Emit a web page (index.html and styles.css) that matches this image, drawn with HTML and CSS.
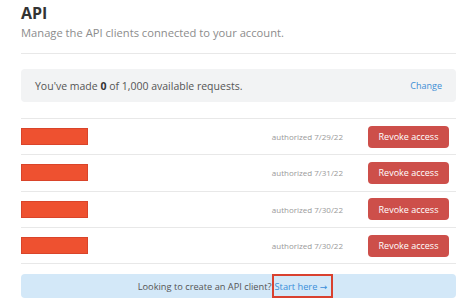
FILE: index.html
```html
<!DOCTYPE html>
<html>
<head>
<meta charset="utf-8">
<link rel="stylesheet" href="styles.css">
</head>
<body>
<div class="page">
  <header class="head">
    <h1 class="title">API</h1>
    <p class="subtitle">Manage the API clients connected to your account.</p>
  </header>
  <div class="usage">
    <span class="usage-text">You've made <b>0</b> of 1,000 available requests.</span>
    <a class="change" href="#">Change</a>
  </div>
  <ul class="clients">
    <li class="client">
      <span class="redact"></span>
      <span class="auth">authorized 7/29/22</span>
      <button class="revoke">Revoke access</button>
    </li>
    <li class="client">
      <span class="redact"></span>
      <span class="auth">authorized 7/31/22</span>
      <button class="revoke">Revoke access</button>
    </li>
    <li class="client">
      <span class="redact"></span>
      <span class="auth">authorized 7/30/22</span>
      <button class="revoke">Revoke access</button>
    </li>
    <li class="client">
      <span class="redact"></span>
      <span class="auth">authorized 7/30/22</span>
      <button class="revoke">Revoke access</button>
    </li>
  </ul>
  <div class="create">
    <span class="create-text">Looking to create an API client?</span><span class="highlight"><a class="start" href="#">Start here <span class="arrow">→</span></a></span>
  </div>
</div>
</body>
</html>
```
FILE: styles.css
```css
* { box-sizing: border-box; }
html, body { margin: 0; padding: 0; background: #ffffff; }
body { font-family: "Open Sans", "Noto Sans", sans-serif; color: #555; }
.page { padding: 3px 18px 0 21px; width: 474px; }
.head { border-bottom: 1px solid #e8e8e8; padding-bottom: 12px; }
.title { margin: 0; font-size: 16px; line-height: 20px; font-weight: 700; color: #333; }
.subtitle { margin: 2px 0 0; font-size: 11.2px; line-height: 16px; color: #8c8c8c; }
.usage { margin-top: 15px; height: 33px; background: #f2f3f4; border-radius: 4px; display: flex; align-items: center; justify-content: space-between; padding: 0 13px 0 14px; }
.usage-text { font-size: 10.5px; color: #555; }
.usage-text b { color: #333; }
.change { font-size: 9px; color: #3d8ed4; text-decoration: none; margin-right: 1px; }
.clients { list-style: none; margin: 16px 0 0; padding: 0; border-top: 1px solid #e8e8e8; }
.client { height: 36.3px; border-bottom: 1px solid #e8e8e8; display: flex; align-items: center; padding-right: 7px; }
.redact { width: 67px; height: 17px; background: #ee5130; border: 1px solid #d9442a; }
.auth { margin-left: auto; font-size: 8px; color: #999; margin-right: 25px; }
.revoke { width: 81px; height: 22px; border: none; border-radius: 4px; background: #cd4f4a; color: #fff; font-family: inherit; font-size: 9px; padding: 0; }
.create { margin-top: 10px; height: 24px; background: #d3e8f8; border-radius: 4px; display: flex; align-items: center; justify-content: center; padding-right: 6px; font-size: 9.25px; }
.create-text { color: #555; }
.highlight { display: inline-flex; align-items: center; height: 24px; border: 2px solid #d9412f; padding: 0 4px 0 1px; }
.start { color: #3a8ed8; text-decoration: none; }
.arrow { font-family: "DejaVu Sans", sans-serif; font-size: 9px; }
```
